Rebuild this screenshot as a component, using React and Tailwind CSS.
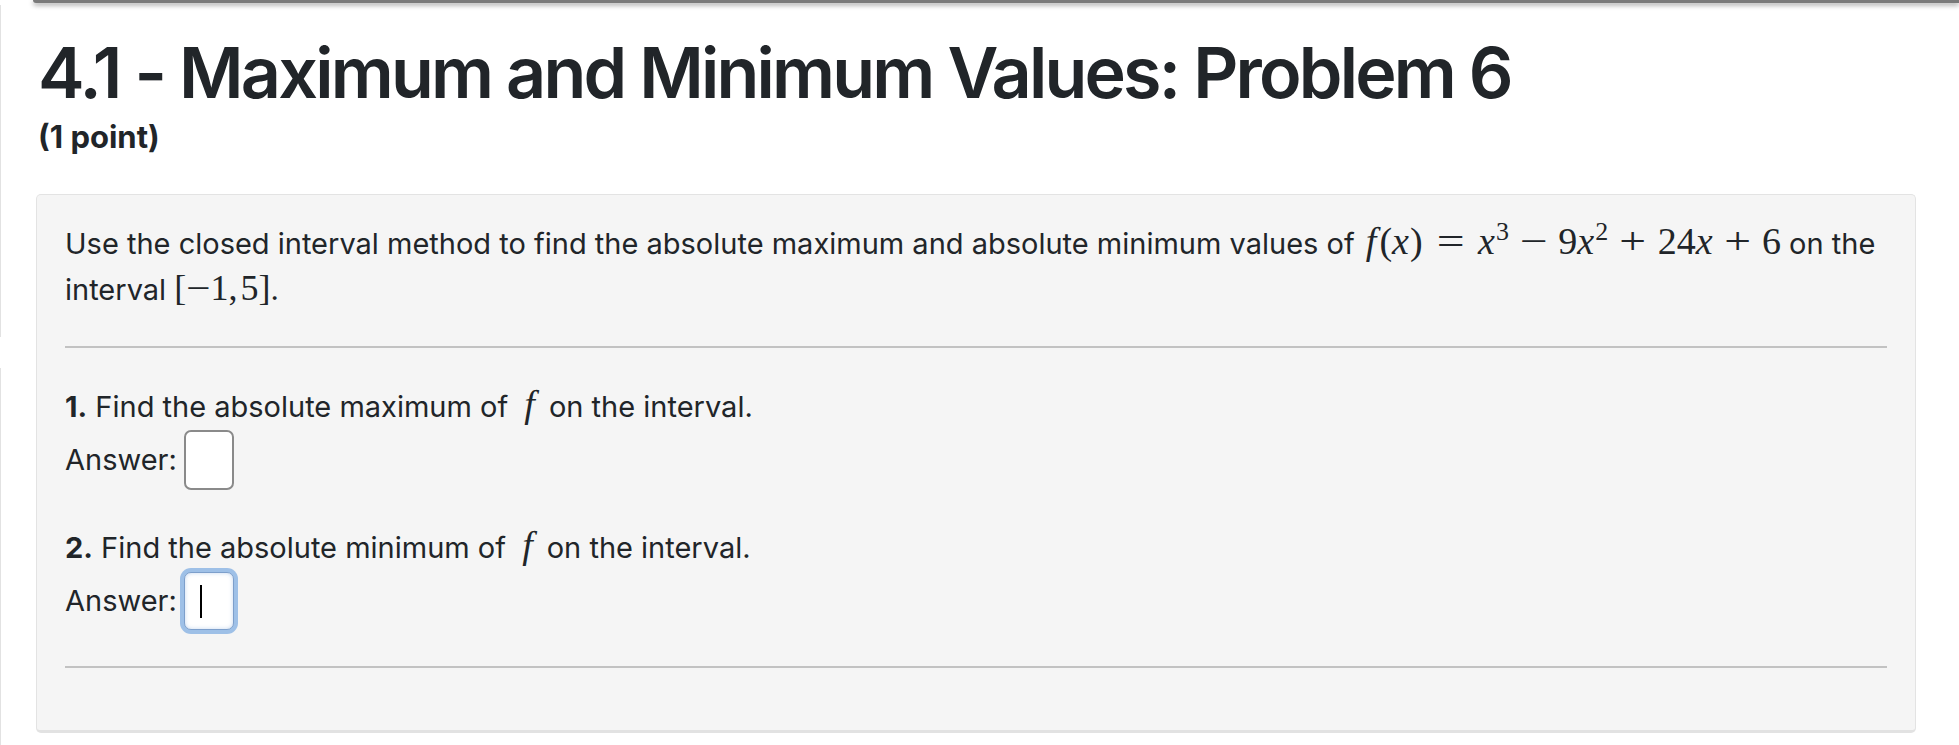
import React from "react";

const serif = "font-['Liberation_Serif','Times_New_Roman',serif]";

function MathF() {
  return (
    <span className={`${serif} text-[38px] leading-none whitespace-nowrap`}>
      <i className="pl-[3px] pr-[3px]">f</i>
      <span>(</span>
      <i>x</i>
      <span className="pl-[1px]">)</span>
      <span className="inline-block mx-[17px] scale-x-[1.3]">=</span>
      <i>x</i>
      <span className="inline-block relative -top-[14px] text-[26px] ml-[1px]">3</span>
      <span className="inline-block mx-[14px] scale-x-[1.3]">−</span>
      <span>9</span>
      <i>x</i>
      <span className="inline-block relative -top-[14px] text-[26px] ml-[1px]">2</span>
      <span className="inline-block mx-[14px] scale-x-[1.25]">+</span>
      <span>24</span>
      <i>x</i>
      <span className="inline-block mx-[14px] scale-x-[1.25]">+</span>
      <span>6</span>
    </span>
  );
}

function Interval() {
  return (
    <span className={`${serif} text-[36px] leading-none whitespace-nowrap`}>
      [<span className="inline-block scale-x-[1.2] mx-[2px]">−</span>1,<span className="ml-[3px]">5</span>]
    </span>
  );
}

function FMath() {
  return <i className={`${serif} text-[38px] leading-none pl-[8px] pr-[14px]`}>f</i>;
}

function AnswerBox({ focused }) {
  if (focused) {
    return (
      <div className="w-[50px] h-[58px] rounded-[7px] bg-white border border-[#7d9fcb] shadow-[0_0_0_4px_rgba(128,174,226,0.75),inset_0_0_4px_rgba(90,140,210,0.35)] flex items-center pl-[15px]">
        <span className="block w-[2px] h-[33px] bg-black" />
      </div>
    );
  }
  return (
    <div className="w-[50px] h-[60px] rounded-[7px] bg-white border-2 border-[#8a8a8a]" />
  );
}

export default function App() {
  return (
    <div className="min-h-[745px] flex bg-white text-[#212529] font-['Inter','Helvetica_Neue',Arial,sans-serif]">
      <div className="w-px flex flex-col shrink-0">
        <div className="mt-[5px] h-[332px] bg-[#e2e2e2]" />
        <div className="mt-[31px] flex-1 bg-[#e2e2e2]" />
      </div>
      <div className="flex-1 flex flex-col">
        <div className="ml-[32px] h-[3px] rounded-bl-[8px] bg-[#7a7a7a] shadow-[0_2px_5px_rgba(0,0,0,0.45)]" />
        <div className="pl-[35px] pr-[43px]">
          <h1 className="mt-[27px] pl-[2px] text-[70px] leading-[85px] font-semibold tracking-[-2.8px]">
            4.1 - Maximum and Minimum Values: Problem 6
          </h1>
          <div className="mt-[4px] pl-[2px] text-[31px] leading-[36px] font-bold">(1 point)</div>

          <div className="mt-[39px] rounded-[5px] bg-[#f5f5f5] border border-[#e3e3e3] border-b-[3px] border-b-[#e2e2e2] pt-[26px] pb-[62px] px-[28px] text-[29px] leading-[46px]">
            <p>
              Use the closed interval method to find the absolute maximum and absolute minimum values of{" "}
              <MathF /> on the interval <Interval />.
            </p>
            <hr className="mt-[33px] border-0 h-[2px] bg-[#c2c2c2]" />

            <div className="mt-[36px]">
              <b className="font-bold">1.</b> Find the absolute maximum of <FMath />on the interval.
            </div>
            <div className="flex items-center h-[60px] gap-[7px]">
              <span>Answer:</span>
              <AnswerBox />
            </div>

            <div className="mt-[35px]">
              <b className="font-bold">2.</b> Find the absolute minimum of <FMath />on the interval.
            </div>
            <div className="flex items-center h-[60px] gap-[7px]">
              <span>Answer:</span>
              <AnswerBox focused />
            </div>

            <hr className="mt-[35px] border-0 h-[2px] bg-[#c2c2c2]" />
          </div>
        </div>
      </div>
    </div>
  );
}
